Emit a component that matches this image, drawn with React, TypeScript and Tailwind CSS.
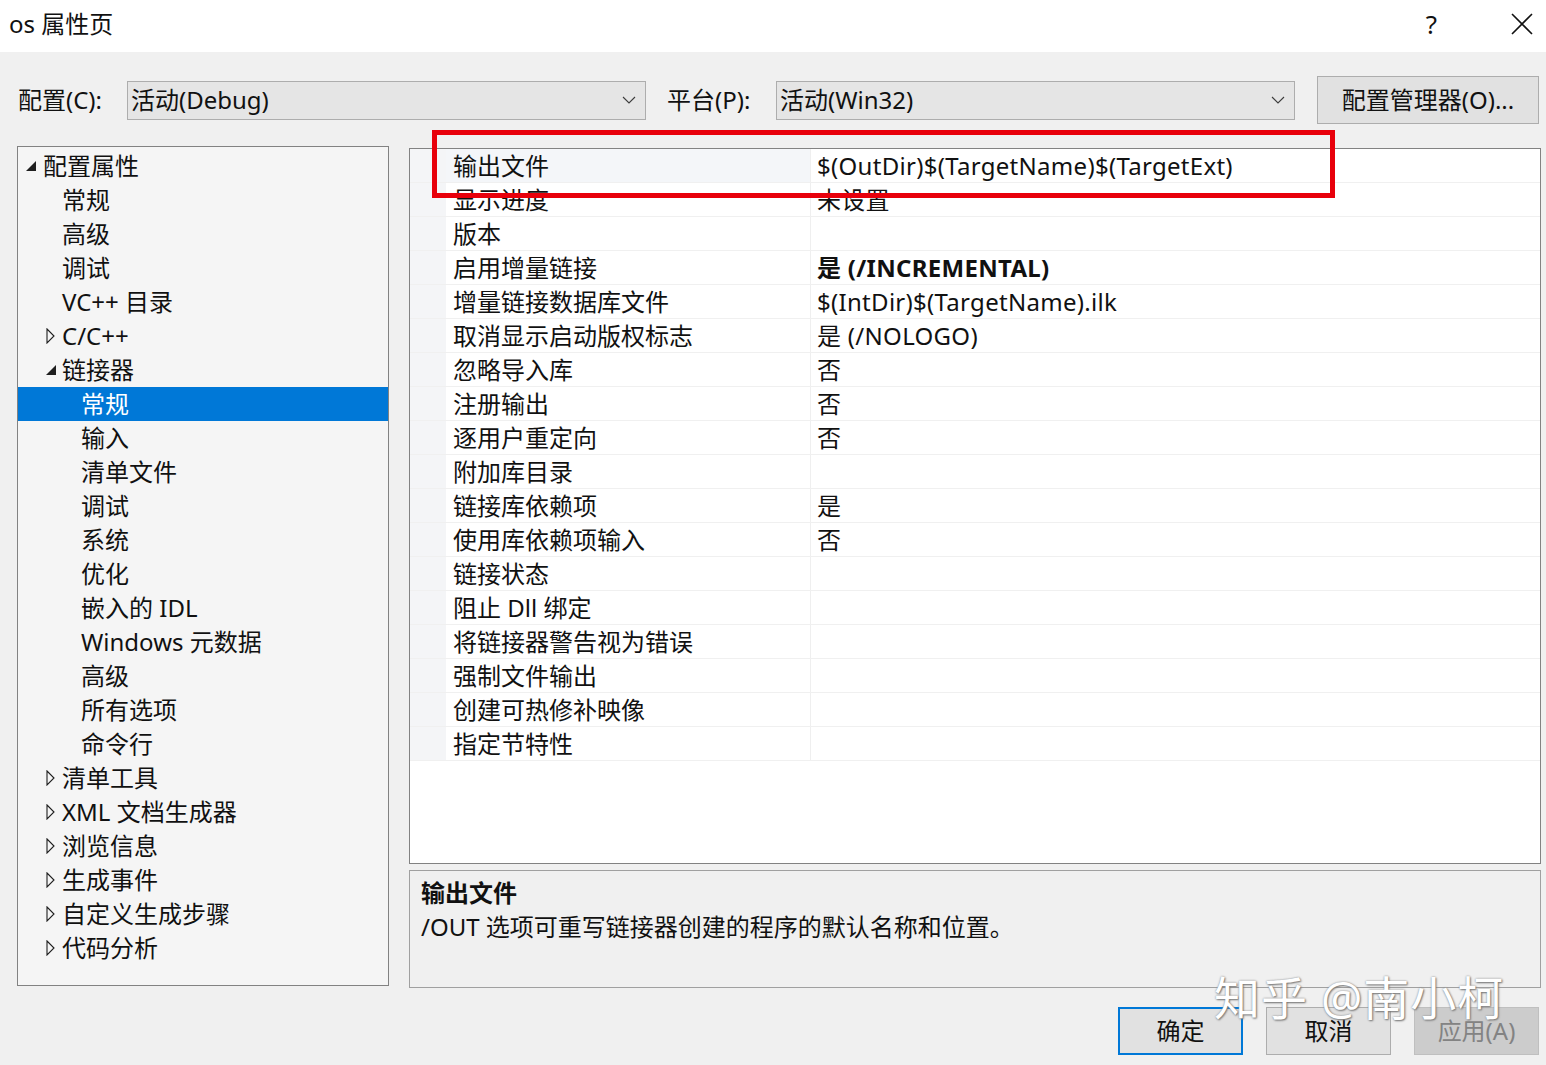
import React from 'react'

const FONT = { fontFamily: '"Noto Sans", "Noto Sans CJK SC", sans-serif' }

type Node = { label: string; level: number; exp?: 'open' | 'closed'; selected?: boolean }

const tree: Node[] = [
  { label: '配置属性', level: 0, exp: 'open' },
  { label: '常规', level: 1 },
  { label: '高级', level: 1 },
  { label: '调试', level: 1 },
  { label: 'VC++ 目录', level: 1 },
  { label: 'C/C++', level: 1, exp: 'closed' },
  { label: '链接器', level: 1, exp: 'open' },
  { label: '常规', level: 2, selected: true },
  { label: '输入', level: 2 },
  { label: '清单文件', level: 2 },
  { label: '调试', level: 2 },
  { label: '系统', level: 2 },
  { label: '优化', level: 2 },
  { label: '嵌入的 IDL', level: 2 },
  { label: 'Windows 元数据', level: 2 },
  { label: '高级', level: 2 },
  { label: '所有选项', level: 2 },
  { label: '命令行', level: 2 },
  { label: '清单工具', level: 1, exp: 'closed' },
  { label: 'XML 文档生成器', level: 1, exp: 'closed' },
  { label: '浏览信息', level: 1, exp: 'closed' },
  { label: '生成事件', level: 1, exp: 'closed' },
  { label: '自定义生成步骤', level: 1, exp: 'closed' },
  { label: '代码分析', level: 1, exp: 'closed' },
]

const props: [string, string, boolean?][] = [
  ['输出文件', '$(OutDir)$(TargetName)$(TargetExt)'],
  ['显示进度', '未设置'],
  ['版本', ''],
  ['启用增量链接', '是 (/INCREMENTAL)', true],
  ['增量链接数据库文件', '$(IntDir)$(TargetName).ilk'],
  ['取消显示启动版权标志', '是 (/NOLOGO)'],
  ['忽略导入库', '否'],
  ['注册输出', '否'],
  ['逐用户重定向', '否'],
  ['附加库目录', ''],
  ['链接库依赖项', '是'],
  ['使用库依赖项输入', '否'],
  ['链接状态', ''],
  ['阻止 Dll 绑定', ''],
  ['将链接器警告视为错误', ''],
  ['强制文件输出', ''],
  ['创建可热修补映像', ''],
  ['指定节特性', ''],
]

function Chevron() {
  return (
    <svg width="14" height="8" viewBox="0 0 14 8" fill="none">
      <path d="M1 1l6 6 6-6" stroke="#3c3c3c" strokeWidth="1.1" />
    </svg>
  )
}

function Expander({ kind }: { kind: 'open' | 'closed' }) {
  if (kind === 'open') {
    return (
      <svg width="12" height="12" viewBox="0 0 12 12">
        <path d="M10 1v10H0z" fill="#1e1e1e" />
      </svg>
    )
  }
  return (
    <svg width="9" height="16" viewBox="0 0 9 16">
      <path d="M1 1l7 7-7 7z" fill="none" stroke="#1e1e1e" strokeWidth="1.1" />
    </svg>
  )
}

function Dropdown({ value, width }: { value: string; width: string }) {
  return (
    <div className={`${width} h-[39px] bg-[#e5e5e5] border border-[#adadad] flex items-center justify-between pl-[3px] pr-[9px]`}>
      <span className="text-[24px] text-[#111]">{value}</span>
      <Chevron />
    </div>
  )
}

export default function App() {
  return (
    <div className="relative w-[1546px] h-[1065px] bg-[#f0f0f0] overflow-hidden text-[#111]" style={FONT}>
      {/* title bar */}
      <div className="h-[52px] bg-white flex items-center justify-between pl-[9px] pr-[13px]">
        <span className="text-[24px] leading-none mt-[-4px]">os 属性页</span>
        <div className="flex items-center gap-[74px] mt-[-4px]">
          <span className="text-[26px] leading-none">?</span>
          <svg width="22" height="22" viewBox="0 0 22 22">
            <path d="M1 1l20 20M21 1L1 21" stroke="#111" strokeWidth="1.6" />
          </svg>
        </div>
      </div>

      {/* config row */}
      <div className="flex items-center mt-[24px] h-[48px] pl-[18px]">
        <span className="text-[24px] w-[109px]">配置(C):</span>
        <Dropdown value="活动(Debug)" width="w-[519px]" />
        <span className="text-[24px] ml-[21px] w-[109px]">平台(P):</span>
        <Dropdown value="活动(Win32)" width="w-[519px]" />
        <div className="ml-[22px] w-[222px] h-[48px] bg-[#e1e1e1] border border-[#adadad] flex items-center justify-center text-[24px]">
          配置管理器(O)...
        </div>
      </div>

      {/* main */}
      <div className="flex mt-[22px] pl-[17px]">
        <div className="w-[372px] h-[840px] bg-[#f5f5f5] border border-[#828282] pt-[2px]">
          {tree.map((n, i) => (
            <div
              key={i}
              className={`h-[34px] flex items-center text-[24px] ${n.selected ? 'bg-[#0078d7] text-white' : ''}`}
            >
              <div className={`flex items-center ${n.level === 0 ? 'w-[25px] pl-[8px]' : n.level === 1 ? 'w-[44px] pl-[28px]' : 'w-[63px]'}`}>
                {n.exp && <Expander kind={n.exp} />}
              </div>
              <span className="leading-none mt-[-1px]">{n.label}</span>
            </div>
          ))}
        </div>

        <div className="ml-[20px] mt-[2px] w-[1132px] flex flex-col">
          <div className="h-[716px] bg-white border border-[#828282]">
            {props.map(([name, val, bold], i) => (
              <div key={i} className="h-[34px] flex border-b border-[#f0f0f0]">
                <div className="w-[36px] bg-[#f4f5f7]" />
                <div className={`w-[365px] pl-[7px] flex items-center text-[24px] border-r border-[#efefef] ${i === 0 ? 'bg-[#f4f6f9]' : ''}`}>
                  <span>{name}</span>
                </div>
                <div className="flex-1 pl-[6px] flex items-center text-[24px]">
                  <span className={`tracking-[0.3px] ${bold ? 'font-bold' : ''}`}>{val}</span>
                </div>
              </div>
            ))}
          </div>
          <div className="mt-[6px] h-[118px] bg-[#f0f0f0] border border-[#a0a0a0] pl-[11px] pt-[5px]">
            <div className="text-[24px] font-bold leading-[34px]">输出文件</div>
            <div className="text-[24px] leading-[34px]">/OUT 选项可重写链接器创建的程序的默认名称和位置。</div>
          </div>
        </div>
      </div>

      {/* buttons */}
      <div className="flex justify-end gap-[23px] pr-[7px] mt-[19px]">
        <div className="w-[125px] h-[48px] bg-[#e1e1e1] border-2 border-[#0078d7] flex items-center justify-center text-[24px]">确定</div>
        <div className="w-[125px] h-[48px] bg-[#e1e1e1] border border-[#adadad] flex items-center justify-center text-[24px]">取消</div>
        <div className="w-[125px] h-[48px] bg-[#cccccc] border border-[#bfbfbf] flex items-center justify-center text-[24px] text-[#838383]">应用(A)</div>
      </div>

      {/* annotation */}
      <div className="absolute left-[432px] top-[130px] w-[903px] h-[68px] border-[5px] border-[#e8000b]" />

      {/* watermark */}
      <div
        className="absolute left-[1214px] top-[974px] text-[46px] leading-none text-white tracking-[1px]"
        style={{ textShadow: '1px 1px 2px #777, 0 0 2px #888' }}
      >
        知乎 @南小柯
      </div>
    </div>
  )
}
